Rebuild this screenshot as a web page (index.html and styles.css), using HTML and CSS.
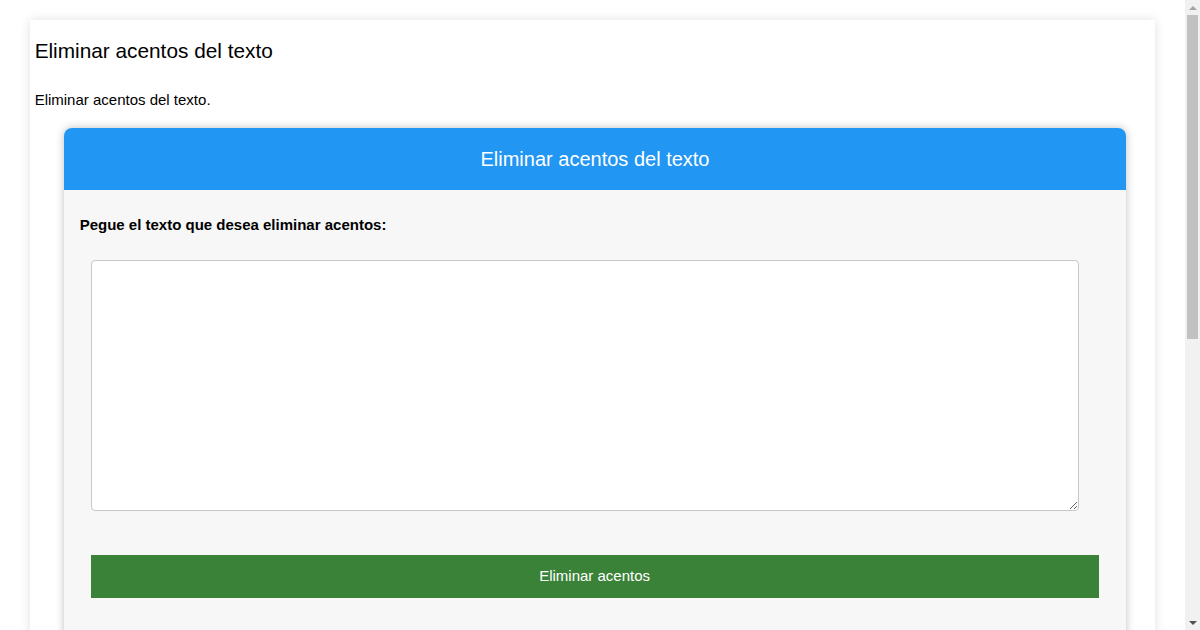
FILE: index.html
```html
<!DOCTYPE html>
<html lang="es">
<head>
<meta charset="utf-8">
<title>Eliminar acentos del texto</title>
<link rel="stylesheet" href="styles.css">
</head>
<body>
<div class="page">
  <h2 class="title">Eliminar acentos del texto</h2>
  <p class="intro">Eliminar acentos del texto.</p>
  <div class="panel">
    <div class="panel-header">Eliminar acentos del texto</div>
    <div class="panel-body">
      <label class="label" for="entrada">Pegue el texto que desea eliminar acentos:</label>
      <textarea id="entrada" class="input"></textarea>
      <button class="btn" type="button">Eliminar acentos</button>
      <div class="result-space"></div>
    </div>
  </div>
</div>
<div class="scrollbar" aria-hidden="true">
  <div class="arrow arrow-up"></div>
  <div class="track">
    <div class="thumb"></div>
  </div>
  <div class="arrow arrow-down"></div>
</div>
</body>
</html>
```
FILE: styles.css
```css
html, body {
  margin: 0;
  padding: 0;
  background: #ffffff;
}
html {
  overflow: hidden;
}
body {
  margin-right: 15px;
  font-family: "Liberation Sans", Arial, sans-serif;
  color: #000;
}
.page {
  width: 95%;
  box-sizing: border-box;
  margin: 20px auto;
  padding: 5px 5px 40px;
  background: #fff;
  box-shadow: 0 0 10px rgba(0, 0, 0, 0.12);
}
.title {
  font-size: 20.8px;
  font-weight: normal;
  line-height: 24px;
  margin: 14px 0 28px;
}
.intro {
  font-size: 15px;
  line-height: 17px;
  margin: 0 0 20px;
}
.panel {
  margin: 0 24px 0 29px;
  border-radius: 8px;
  background: #f7f7f7;
  box-shadow: 0 0 8px rgba(0, 0, 0, 0.25);
  overflow: hidden;
}
.panel-header {
  background: #2196f3;
  color: #fff;
  font-size: 20px;
  line-height: 62px;
  height: 62px;
  text-align: center;
}
.panel-body {
  padding: 16px;
}
.label {
  display: block;
  font-size: 15px;
  font-weight: bold;
  line-height: 17px;
  margin-top: 10px;
}
.input {
  display: block;
  box-sizing: border-box;
  width: 988px;
  height: 251px;
  margin: 27px 0 0 11px;
  border: 1px solid #c8c8c8;
  border-radius: 4px;
  background: #fff;
  font-family: "Liberation Sans", Arial, sans-serif;
  font-size: 15px;
}
.btn {
  display: block;
  width: 1008px;
  height: 43px;
  margin: 44px 11px 0;
  border: none;
  background: #3b8239;
  color: #fff;
  font-family: "Liberation Sans", Arial, sans-serif;
  font-size: 15px;
  padding: 0 0 2px;
}
.result-space {
  height: 440px;
}

/* imitation of the browser's vertical scrollbar */
.scrollbar {
  position: fixed;
  top: 0;
  right: 0;
  width: 15px;
  height: 100%;
  background: #f1f1f1;
  display: flex;
  flex-direction: column;
}
.arrow {
  height: 15px;
  display: flex;
  align-items: center;
  justify-content: center;
}
.arrow::before {
  content: "";
  width: 0;
  height: 0;
  border-left: 4px solid transparent;
  border-right: 4px solid transparent;
}
.arrow-up::before {
  border-bottom: 4px solid #a3a3a3;
}
.arrow-down::before {
  border-top: 4px solid #505050;
}
.track {
  flex: 1;
  padding: 0 2px;
}
.thumb {
  height: 324px;
  background: #c1c1c1;
}
```
